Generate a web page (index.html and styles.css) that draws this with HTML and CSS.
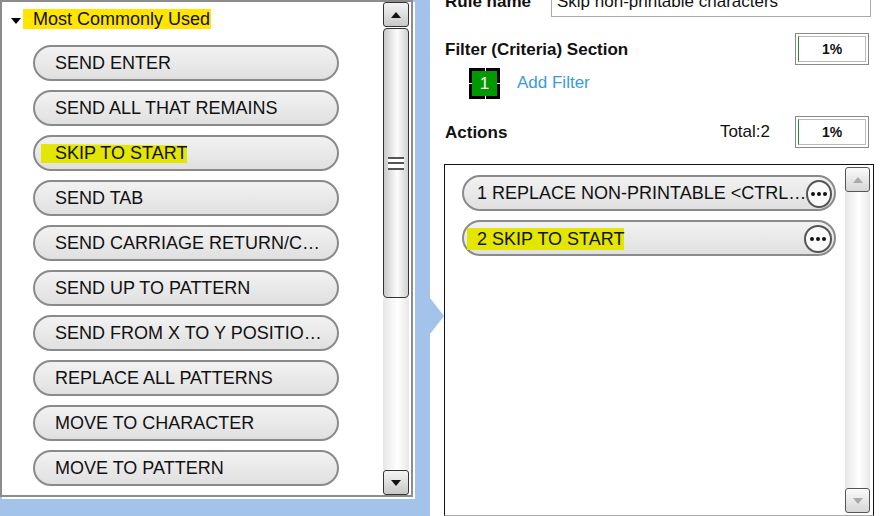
FILE: index.html
```html
<!DOCTYPE html>
<html lang="en">
<head>
  <meta charset="UTF-8">
  <title>Rule editor</title>
  <link rel="stylesheet" href="styles.css">
</head>
<body>
  <div class="page">
    <div class="left">
      <div class="tree">
        <div class="tree-list">
          <div class="group-head">
            <span class="caret"></span>
            <span class="group-title">Most Commonly Used</span>
          </div>
          <div class="cmd">SEND ENTER</div>
          <div class="cmd">SEND ALL THAT REMAINS</div>
          <div class="cmd"><span class="mark">SKIP TO START</span></div>
          <div class="cmd">SEND TAB</div>
          <div class="cmd">SEND CARRIAGE RETURN/C…</div>
          <div class="cmd">SEND UP TO PATTERN</div>
          <div class="cmd">SEND FROM X TO Y POSITIO…</div>
          <div class="cmd">REPLACE ALL PATTERNS</div>
          <div class="cmd">MOVE TO CHARACTER</div>
          <div class="cmd">MOVE TO PATTERN</div>
        </div>
        <div class="vscroll">
          <div class="sbtn"><span class="arr-up"></span></div>
          <div class="thumb"><span class="grip"></span></div>
          <div class="track"></div>
          <div class="sbtn"><span class="arr-down"></span></div>
        </div>
      </div>
      <span class="pointer"></span>
    </div>

    <div class="right">
      <div class="rule-row">
        <span class="label">Rule name</span>
        <div class="textbox">Skip non-printable characters</div>
      </div>

      <div class="sec-row">
        <span class="label">Filter (Criteria) Section</span>
        <div class="pct"><div class="pct-in">1%</div></div>
      </div>

      <div class="filter-row">
        <span class="badge">1</span>
        <a href="#" class="add-link">Add Filter</a>
      </div>

      <div class="sec-row actions-row">
        <span class="label">Actions</span>
        <span class="total">Total:2</span>
        <div class="pct"><div class="pct-in">1%</div></div>
      </div>

      <div class="actions">
        <div class="action-list">
          <div class="action">
            <span class="action-text">1 REPLACE NON-PRINTABLE &lt;CTRL…</span>
            <span class="more"><i></i><i></i><i></i></span>
          </div>
          <div class="action">
            <span class="action-text"><span class="mark2">2 SKIP TO START</span></span>
            <span class="more"><i></i><i></i><i></i></span>
          </div>
        </div>
        <div class="vscroll off">
          <div class="sbtn"><span class="arr-up"></span></div>
          <div class="track"></div>
          <div class="sbtn"><span class="arr-down"></span></div>
        </div>
      </div>
    </div>
  </div>
</body>
</html>
```

FILE: styles.css
```css
body {
  margin: 0;
  font-family: 'Liberation Sans', Arial, sans-serif;
  color: #111;
  background: #fff;
}
.page {
  display: flex;
  width: 882px;
  height: 516px;
  overflow: hidden;
}
.left {
  position: relative;
  flex: none;
  width: 430px;
  background: #a3c3ea;
}
.tree {
  display: flex;
  width: 413px;
  height: 497px;
  box-sizing: border-box;
  border: 2px solid #8c8c8c;
  background: #fff;
  box-shadow: 2px 2px 0 #fff;
}
.tree-list {
  flex: 1;
  padding: 7px 0 0 9px;
}
.group-head {
  display: flex;
  align-items: center;
  height: 20px;
  margin-bottom: 16px;
}
.caret {
  width: 0;
  height: 0;
  border-left: 5px solid transparent;
  border-right: 5px solid transparent;
  border-top: 6px solid #000;
  margin: 3px 2px 0 0;
}
.group-title {
  background: #ffe500;
  font-size: 18px;
  line-height: 20px;
  padding: 0 1px 0 10px;
}
.cmd {
  width: 306px;
  height: 36px;
  box-sizing: border-box;
  margin: 0 0 9px 22px;
  padding-left: 20px;
  border: 2px solid #8a8a8a;
  border-radius: 18px;
  background: linear-gradient(#f2f2f2, #e0e0e0);
  font-size: 18px;
  line-height: 33px;
  white-space: nowrap;
}
.mark {
  display: inline-block;
  background: #e3e600;
  line-height: 19px;
  margin-left: -14px;
  padding-left: 14px;
  clip-path: polygon(0 0, 100% 8%, 100% 100%, 0 100%);
}
.vscroll {
  display: flex;
  flex-direction: column;
  width: 26px;
  margin-right: 2px;
  flex: none;
}
.sbtn {
  display: flex;
  align-items: center;
  justify-content: center;
  height: 25px;
  box-sizing: border-box;
  border: 1px solid #333;
  border-radius: 3px;
  background: linear-gradient(#f4f4f4, #c8c8c8);
}
.arr-up, .arr-down {
  width: 0;
  height: 0;
  border-left: 5px solid transparent;
  border-right: 5px solid transparent;
}
.arr-up { border-bottom: 6px solid #111; }
.arr-down { border-top: 6px solid #111; }
.thumb {
  display: flex;
  align-items: center;
  justify-content: center;
  height: 270px;
  margin-top: 1px;
  box-sizing: border-box;
  border: 1px solid #333;
  border-radius: 4px;
  background: linear-gradient(90deg, #c9c9c9, #fdfdfd 55%, #d0d0d0);
}
.grip {
  width: 16px;
  height: 9px;
  border-top: 2px solid #555;
  border-bottom: 2px solid #555;
  background: linear-gradient(#fff 3px, #555 3px, #555 5px, #fff 5px);
}
.track {
  flex: 1;
  background: linear-gradient(90deg, #e6e6e6, #fff 55%, #e8e8e8);
}
.pointer {
  position: absolute;
  right: -14px;
  top: 298px;
  width: 0;
  height: 0;
  border-top: 18px solid transparent;
  border-bottom: 18px solid transparent;
  border-left: 14px solid #a3c3ea;
}
.right {
  flex: 1;
  padding-left: 15px;
  font-size: 16px;
}
.label {
  font-weight: bold;
  font-size: 17px;
}
.rule-row {
  display: flex;
  align-items: center;
  margin-top: -13px;
  height: 30px;
}
.textbox {
  margin-left: 20px;
  width: 320px;
  height: 30px;
  box-sizing: border-box;
  border: 1px solid #aaa;
  padding-left: 5px;
  line-height: 28px;
  font-size: 17px;
}
.sec-row {
  display: flex;
  align-items: center;
  height: 32px;
  margin-top: 16px;
}
.sec-row .label {
  flex: 1;
  padding-top: 2px;
}
.total {
  font-size: 17px;
  margin-right: 25px;
}
.pct {
  width: 74px;
  height: 32px;
  box-sizing: border-box;
  border: 1px solid #888;
  padding: 2px;
  margin-right: 13px;
  background: #fff;
}
.pct-in {
  height: 100%;
  box-sizing: border-box;
  border: 1px solid #bbb;
  border-left: 1px solid #2a8a2a;
  text-align: center;
  font-weight: bold;
  font-size: 14px;
  line-height: 25px;
}
.filter-row {
  display: flex;
  align-items: center;
  height: 32px;
  margin-top: 2px;
  padding-left: 24px;
}
.badge {
  position: relative;
  width: 31px;
  height: 31px;
  box-sizing: border-box;
  border: 3px solid #000;
  background: #009a00;
  color: #fff;
  text-align: center;
  line-height: 25px;
  font-size: 17px;
}
.badge::before,
.badge::after {
  content: "";
  position: absolute;
}
.badge::before {
  left: 50%;
  top: -3px;
  bottom: -3px;
  width: 1px;
  background: linear-gradient(#fff 3px, transparent 3px, transparent calc(100% - 3px), #fff calc(100% - 3px));
}
.badge::after {
  top: 50%;
  left: -3px;
  right: -3px;
  height: 1px;
  background: linear-gradient(90deg, #fff 3px, transparent 3px, transparent calc(100% - 3px), #fff calc(100% - 3px));
}
.add-link {
  margin-left: 17px;
  color: #3a9be0;
  text-decoration: none;
  font-size: 17px;
}
.actions-row {
  margin-top: 17px;
}
.actions {
  display: flex;
  width: 430px;
  height: 352px;
  box-sizing: border-box;
  margin: 16px 0 0 -1px;
  border: 1px solid #111;
  border-bottom-color: #aaa;
}
.action-list {
  flex: 1;
  padding: 10px 0 0 17px;
}
.action {
  display: flex;
  align-items: center;
  width: 374px;
  height: 36px;
  box-sizing: border-box;
  margin-bottom: 9px;
  padding: 1px 2px 0 13px;
  border: 2px solid #8a8a8a;
  border-radius: 18px;
  background: linear-gradient(#f2f2f2, #e0e0e0);
  font-size: 18px;
}
.action-text {
  flex: 1;
  white-space: nowrap;
}
.mark2 {
  display: inline-block;
  background: #e3e600;
  line-height: 22px;
  margin-left: -10px;
  padding-left: 10px;
}
.more {
  display: flex;
  align-items: center;
  justify-content: center;
  gap: 2px;
  width: 28px;
  height: 28px;
  box-sizing: border-box;
  border: 2px solid #555;
  border-radius: 50%;
  background: #fafafa;
}
.more i {
  width: 4px;
  height: 4px;
  border-radius: 50%;
  background: #111;
}
.vscroll.off {
  width: 25px;
  margin: 2px 3px 2px 0;
}
.vscroll.off .sbtn {
  border-color: #555;
  background: linear-gradient(#fafafa, #d6d6d6);
}
.vscroll.off .arr-up { border-bottom-color: #aaa; }
.vscroll.off .arr-down { border-top-color: #aaa; }
```
